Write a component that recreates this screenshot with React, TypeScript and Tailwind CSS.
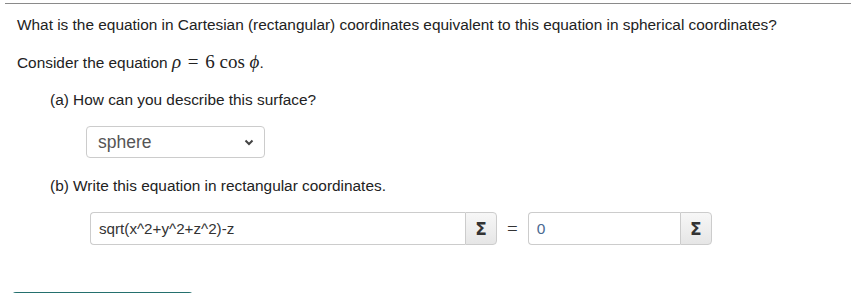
import React from 'react';

const SigmaButton = () => (
  <button
    type="button"
    className="flex h-full w-[32px] shrink-0 items-center justify-center rounded-r-[4px] border border-[#cccccc] bg-gradient-to-b from-[#f7f7f7] to-[#e6e6e6] font-['DejaVu_Sans',sans-serif] text-[17px] font-bold text-[#333333]"
  >
    Σ
  </button>
);

export default function App() {
  return (
    <div className="h-[293px] overflow-hidden bg-white font-['Liberation_Sans',Arial,sans-serif] text-[15.4px] leading-[20px] text-[#222222]">
      <div className="ml-[5px] mt-[3px] border-t-[1.5px] border-[#8a8a8a] pl-[12px]">
        {/* Question */}
        <p className="mt-[11px]">
          What is the equation in Cartesian (rectangular) coordinates equivalent to this equation in spherical coordinates?
        </p>
        <p className="mt-[17px]">
          Consider the equation{' '}
          <span className="font-['Liberation_Serif',serif] text-[19px]">
            <i>ρ</i> <span className="mx-[2px]">=</span> 6 cos <i>ϕ</i>
          </span>
          .
        </p>

        <div className="pl-[33px]">
          {/* Part (a) */}
          <p className="mt-[17px]">(a) How can you describe this surface?</p>
          <div className="ml-[36px] mt-[16px] flex h-[32px] w-[179px] items-center justify-between rounded-[4px] border border-[#cccccc] bg-white pl-[11px] pr-[10px]">
            <span className="text-[17.5px] text-[#555555]">sphere</span>
            <svg width="10" height="7" viewBox="0 0 10 7">
              <path d="M1.5 1.5 L5 5 L8.5 1.5" fill="none" stroke="#444" strokeWidth="2" />
            </svg>
          </div>

          {/* Part (b) */}
          <p className="mt-[18px]">(b) Write this equation in rectangular coordinates.</p>
          <div className="ml-[40px] mt-[16px] flex h-[33px] items-center">
            <div className="flex h-full w-[407px]">
              <div className="flex flex-1 items-center rounded-l-[4px] border border-r-0 border-[#cccccc] pl-[8px] text-[15.2px] text-[#333333]">
                sqrt(x^2+y^2+z^2)-z
              </div>
              <SigmaButton />
            </div>
            <span className="mx-[10px] font-['Liberation_Serif',serif] text-[19px] text-[#333333]">=</span>
            <div className="flex h-full w-[184px]">
              <div className="flex flex-1 items-center rounded-l-[4px] border border-r-0 border-[#cccccc] pl-[8px] text-[15.5px] text-[#4a6a92]">
                0
              </div>
              <SigmaButton />
            </div>
          </div>
        </div>
      </div>

      {/* Submit button edge */}
      <div className="ml-[12px] mt-[47px] h-[30px] w-[181px] rounded-t-[4px] border-t-2 border-[#24706e] bg-[#2d8683]" />
    </div>
  );
}
